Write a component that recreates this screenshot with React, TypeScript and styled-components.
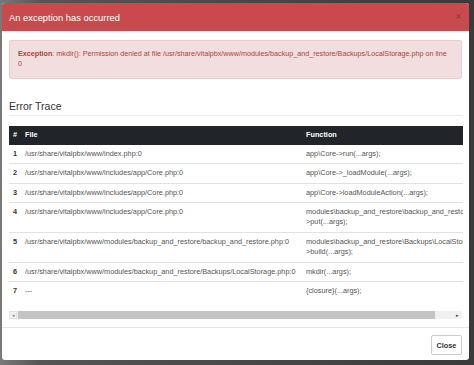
import styled, { createGlobalStyle } from "styled-components"

const Global = createGlobalStyle`
html, body {
    margin: 0;
    padding: 0;
    height: 365px;
    overflow: hidden;
}
body {
    background: linear-gradient(90deg, #7a7a7a 0px, #555 40px, #3a3a3a 100%);
    font-family: "Liberation Sans", Arial, sans-serif;
    -webkit-font-smoothing: antialiased;
}
`

type Row = { n: number; file: string; fn: string[] }

const rows: Row[] = [
    { n: 1, file: "/usr/share/vitalpbx/www/index.php:0", fn: ["app\\Core->run(...args);"] },
    { n: 2, file: "/usr/share/vitalpbx/www/includes/app/Core.php:0", fn: ["app\\Core->_loadModule(...args);"] },
    { n: 3, file: "/usr/share/vitalpbx/www/includes/app/Core.php:0", fn: ["app\\Core->loadModuleAction(...args);"] },
    { n: 4, file: "/usr/share/vitalpbx/www/includes/app/Core.php:0", fn: ["modules\\backup_and_restore\\backup_and_restore-", ">put(...args);"] },
    { n: 5, file: "/usr/share/vitalpbx/www/modules/backup_and_restore/backup_and_restore.php:0", fn: ["modules\\backup_and_restore\\Backups\\LocalStorage-", ">build(...args);"] },
    { n: 6, file: "/usr/share/vitalpbx/www/modules/backup_and_restore/Backups/LocalStorage.php:0", fn: ["mkdir(...args);"] },
    { n: 7, file: "---", fn: ["{closure}(...args);"] },
]

const App = () => {
    return (
        <>
            <Global />
            <Modal>
                <Header>
                    <Title>An exception has occurred</Title>
                    <CloseX>×</CloseX>
                </Header>
                <Body>
                    <Alert>
                        <b>Exception</b>: mkdir(): Permission denied at file /usr/share/vitalpbx/www/modules/backup_and_restore/Backups/LocalStorage.php on line 0
                    </Alert>
                    <Heading>Error Trace</Heading>
                    <TableWrap>
                        <Table>
                            <colgroup>
                                <col style={{ width: 12 }} />
                                <col style={{ width: 281 }} />
                                <col style={{ width: 230 }} />
                            </colgroup>
                            <thead>
                                <tr>
                                    <Th>#</Th>
                                    <Th>File</Th>
                                    <Th>Function</Th>
                                </tr>
                            </thead>
                            <tbody>
                                {rows.map((r) => (
                                    <tr key={r.n}>
                                        <Td $num>{r.n}</Td>
                                        <Td>{r.file}</Td>
                                        <Td>
                                            {r.fn.map((l, i) => (
                                                <span key={i}>
                                                    {i > 0 && <br />}
                                                    {l}
                                                </span>
                                            ))}
                                        </Td>
                                    </tr>
                                ))}
                            </tbody>
                        </Table>
                    </TableWrap>
                    <ScrollBar>
                        <ArrowBox>◂</ArrowBox>
                        <Thumb />
                        <TrackEnd>▸</TrackEnd>
                    </ScrollBar>
                </Body>
                <Footer>
                    <CloseButton>Close</CloseButton>
                </Footer>
            </Modal>
        </>
    )
}

export default App

const Modal = styled.div`
margin: 3px 5px 0 2px;
width: 467px;
background-color: #fff;
border-radius: 3px;
overflow: hidden;
`
const Header = styled.div`
height: 28px;
background-color: #c9494c;
display: flex;
justify-content: space-between;
align-items: center;
padding: 0 8px 0 7px;
`
const Title = styled.div`
color: #fff;
font-size: 9.4px;
padding-top: 1px;
`
const CloseX = styled.div`
color: rgba(0, 0, 0, 0.22);
font-size: 10px;
font-weight: bold;
margin-top: -2px;
`
const Body = styled.div`
padding: 9px 7px 8px 7px;
border-bottom: 1px solid #e5e5e5;
`
const Alert = styled.div`
background-color: #f2dede;
border: 1px solid #ebccd1;
border-radius: 2px;
color: #a94442;
font-size: 7.2px;
line-height: 10.4px;
padding: 8px 12px 8px 8px;
`
const Heading = styled.div`
margin-top: 21px;
font-size: 10.5px;
line-height: 13px;
color: #333;
padding-bottom: 2px;
border-bottom: 1px solid #eee;
`
const TableWrap = styled.div`
margin-top: 10px;
width: 454px;
overflow: hidden;
`
const Table = styled.table`
border-collapse: collapse;
table-layout: fixed;
width: 523px;
margin-bottom: 11px;
font-size: 7.3px;
line-height: 10.4px;
`
const Th = styled.th`
background-color: #212529;
color: #fff;
text-align: left;
font-weight: bold;
padding: 4.3px 4px;
white-space: nowrap;
`
const Td = styled.td<{ $num?: boolean }>`
color: ${(p) => (p.$num ? "#333" : "#555")};
font-weight: ${(p) => (p.$num ? "bold" : "normal")};
vertical-align: top;
padding: 4px 4px;
white-space: nowrap;
border-top: 1px solid #dee2e6;
tbody tr:first-child & {
    border-top: none;
}
`
const ScrollBar = styled.div`
display: flex;
height: 8px;
background-color: #f1f1f1;
align-items: stretch;
`
const ArrowBox = styled.div`
width: 8px;
background-color: #f1f1f1;
border: 1px solid #e0e0e0;
box-sizing: border-box;
font-size: 5px;
color: #888;
display: flex;
justify-content: center;
align-items: center;
margin-right: 1px;
`
const Thumb = styled.div`
width: 417px;
background-color: #c4c4c4;
`
const TrackEnd = styled.div`
flex: 1;
display: flex;
justify-content: flex-end;
align-items: center;
padding-right: 3px;
font-size: 5px;
color: #444;
`
const Footer = styled.div`
height: 32px;
display: flex;
justify-content: flex-end;
align-items: flex-start;
padding: 7px 7px 0 7px;
box-sizing: border-box;
`
const CloseButton = styled.div`
width: 31px;
height: 20px;
box-sizing: border-box;
border: 1px solid #ccc;
border-radius: 2px;
background-color: #fff;
color: #333;
font-size: 7.3px;
font-weight: bold;
display: flex;
justify-content: center;
align-items: center;
`
